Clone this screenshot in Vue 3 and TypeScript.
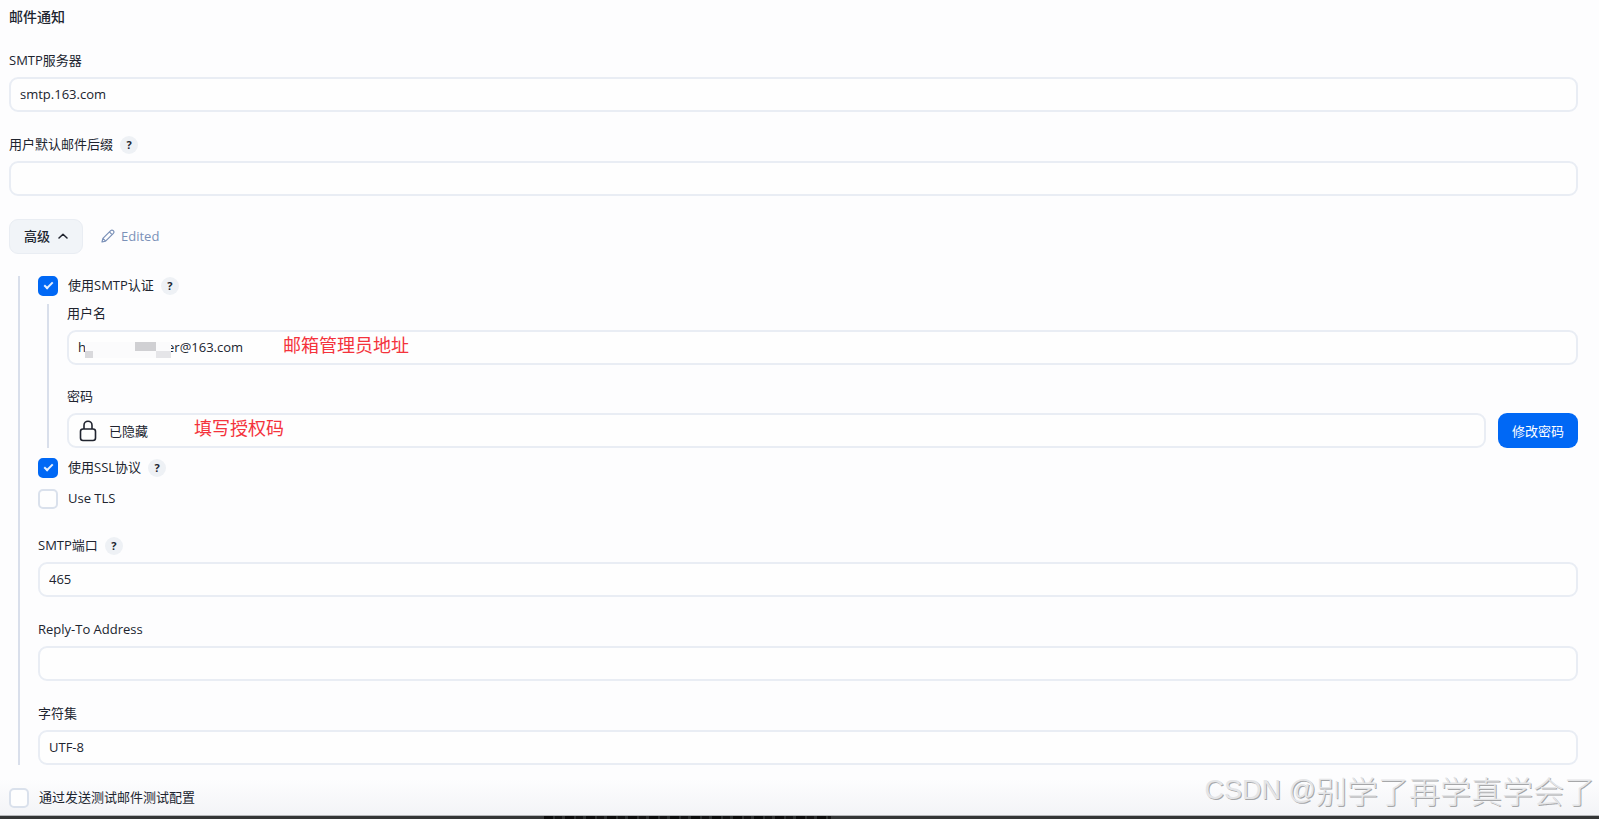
<script setup lang="ts">
import { reactive, ref } from 'vue'

interface MailSettings {
  server: string
  suffix: string
  useAuth: boolean
  username: string
  password: string
  useSsl: boolean
  useTls: boolean
  port: string
  replyTo: string
  charset: string
  sendTest: boolean
}

const settings = reactive<MailSettings>({
  server: 'smtp.163.com',
  suffix: '',
  useAuth: true,
  username: 'h' + '\u00a0'.repeat(24) + 'er@163.com',
  password: '已隐藏',
  useSsl: true,
  useTls: false,
  port: '465',
  replyTo: '',
  charset: 'UTF-8',
  sendTest: false,
})

const advancedOpen = ref(true)
</script>

<template>
  <main class="page">
    <form class="form" @submit.prevent>
      <h1 class="title">邮件通知</h1>

      <div class="field">
        <div class="label-row"><label for="server">SMTP服务器</label></div>
        <input id="server" v-model="settings.server" class="text" type="text" />
      </div>

      <div class="field">
        <div class="label-row">
          <label for="suffix">用户默认邮件后缀</label>
          <button class="help" type="button">?</button>
        </div>
        <input id="suffix" v-model="settings.suffix" class="text" type="text" />
      </div>

      <div class="toolbar">
        <button class="advanced" type="button" :aria-expanded="advancedOpen" @click="advancedOpen = !advancedOpen">
          高级
          <svg width="10" height="6" viewBox="0 0 10 6" fill="none" stroke="currentColor" stroke-width="1.5" stroke-linecap="round" stroke-linejoin="round">
            <path d="M1 5 5 1.2 9 5" />
          </svg>
        </button>
        <span class="edited">
          <svg width="14" height="14" viewBox="0 0 14 14" fill="none" stroke="currentColor" stroke-width="1.2" stroke-linejoin="round">
            <path d="M1 13 1.9 9.4 9.7 1.6Q11 .4 12.3 1.7T12.4 4.3L4.6 12.1ZM8.4 2.9 11.1 5.6M1.9 9.4 4.6 12.1" />
          </svg>
          Edited
        </span>
      </div>

      <section v-if="advancedOpen" class="group">
        <div class="check-row">
          <input id="auth" v-model="settings.useAuth" class="box" type="checkbox" />
          <label for="auth">使用SMTP认证</label>
          <button class="help" type="button">?</button>
        </div>

        <div class="subgroup">
          <div class="field">
            <div class="label-row"><label for="username">用户名</label></div>
            <div class="holder">
              <input id="username" v-model="settings.username" class="text" type="text" />
              <span class="mosaic"><i class="tile one"></i><i class="tile two"></i><i class="tile three"></i></span>
              <span class="note user-note">邮箱管理员地址</span>
            </div>
          </div>
          <div class="field">
            <div class="label-row"><label for="password">密码</label></div>
            <div class="password-row">
              <div class="holder">
                <svg class="lock" width="18" height="22" viewBox="0 0 18 22" fill="none" stroke="currentColor" stroke-width="1.6">
                  <rect x="1.5" y="9" width="15" height="11.5" rx="2.5" />
                  <path d="M5 9V5.2a4 4 0 0 1 8 0V9" />
                </svg>
                <input id="password" v-model="settings.password" class="text locked" type="text" readonly />
                <span class="note password-note">填写授权码</span>
              </div>
              <button class="primary" type="button">修改密码</button>
            </div>
          </div>
        </div>

        <div class="check-row">
          <input id="ssl" v-model="settings.useSsl" class="box" type="checkbox" />
          <label for="ssl">使用SSL协议</label>
          <button class="help" type="button">?</button>
        </div>
        <div class="check-row tls">
          <input id="tls" v-model="settings.useTls" class="box" type="checkbox" />
          <label for="tls">Use TLS</label>
        </div>

        <div class="field">
          <div class="label-row">
            <label for="port">SMTP端口</label>
            <button class="help" type="button">?</button>
          </div>
          <input id="port" v-model="settings.port" class="text" type="text" />
        </div>
        <div class="field">
          <div class="label-row"><label for="reply">Reply-To Address</label></div>
          <input id="reply" v-model="settings.replyTo" class="text" type="text" />
        </div>
        <div class="field">
          <div class="label-row"><label for="charset">字符集</label></div>
          <input id="charset" v-model="settings.charset" class="text" type="text" />
        </div>
      </section>

      <div class="check-row">
        <input id="test" v-model="settings.sendTest" class="box" type="checkbox" />
        <label for="test">通过发送测试邮件测试配置</label>
      </div>
    </form>

    <div class="edge"><div class="edge-marks"></div></div>
    <div class="watermark"><span class="latin">CSDN @</span>别学了再学真学会了</div>
  </main>
</template>

<style>
body {
  margin: 0;
  background: #fdfdfe;
}
</style>

<style scoped>
.page {
  position: relative;
  box-sizing: border-box;
  min-height: 100vh;
  display: flex;
  flex-direction: column;
  overflow: hidden;
  background: linear-gradient(#fdfdfe, #f2f3f6) bottom / 100% 40px no-repeat #fdfdfe;
  color: #20242f;
  font-family: "Open Sans", "Noto Sans CJK SC", sans-serif;
  font-size: 13px;
  line-height: 20px;
}
button,
input {
  font: inherit;
  color: inherit;
  margin: 0;
}
.form {
  padding: 7px 21px 7px 9px;
}
.title {
  margin: 0 0 24px;
  font-size: 14px;
  font-weight: 500;
  line-height: 20px;
}
.field {
  margin-bottom: 23px;
}
.label-row,
.check-row {
  display: flex;
  align-items: center;
  height: 20px;
}
.label-row {
  margin-bottom: 6px;
}
label {
  padding-bottom: 2px;
}
.text {
  display: block;
  box-sizing: border-box;
  width: 100%;
  height: 35px;
  padding: 0 9px 1px;
  border: 2px solid #e9edf4;
  border-radius: 9px;
  background: #fefefe;
  outline: none;
}
.help {
  width: 18px;
  height: 18px;
  margin-left: 7px;
  padding: 0;
  border: 0;
  border-radius: 50%;
  background: #eef1f5;
  font-size: 11px;
  font-weight: 700;
  line-height: 18px;
}
.toolbar {
  display: flex;
  align-items: center;
  gap: 18px;
  margin-bottom: 22px;
}
.advanced {
  display: flex;
  align-items: center;
  gap: 8px;
  height: 35px;
  padding: 0 14px 1px;
  border: 1px solid #e9edf3;
  border-radius: 9px;
  background: #f1f4f8;
  font-weight: 500;
}
.edited {
  display: flex;
  align-items: center;
  gap: 6px;
  padding-bottom: 2px;
  color: #7b91b8;
}
.group {
  margin: 0 0 23px 9px;
  padding-left: 18px;
  border-left: 2px solid #d9dfeb;
}
.group > .field:last-child,
.subgroup > .field:last-child {
  margin-bottom: 0;
}
.subgroup {
  margin: 8px 0 10px 9px;
  padding-left: 18px;
  border-left: 2px solid #d9dfeb;
}
.subgroup .field {
  margin-bottom: 22px;
}
.box {
  appearance: none;
  box-sizing: border-box;
  display: grid;
  place-items: center;
  width: 20px;
  height: 20px;
  margin-right: 10px;
  border: 2px solid #dae1ec;
  border-radius: 5px;
  background: #fefefe;
}
.box:checked {
  border-color: #0068f5;
  background: #0068f5;
}
.box:checked::after {
  content: "";
  box-sizing: border-box;
  width: 9px;
  height: 5px;
  margin-bottom: 3px;
  border: solid #e6f0ff;
  border-width: 0 0 2px 2px;
  transform: rotate(-45deg);
}
.tls {
  margin: 11px 0 27px;
}
.holder {
  position: relative;
  flex: 1;
}
.mosaic {
  position: absolute;
  left: 18px;
  top: 12px;
  width: 86px;
  height: 16px;
  background: #fbfbfc;
}
.tile {
  position: absolute;
}
.one {
  left: 0;
  bottom: 0;
  width: 8px;
  height: 7px;
  background: #d9d9dc;
}
.two {
  left: 50px;
  top: 0;
  width: 21px;
  height: 9px;
  background: #d0d0d3;
}
.three {
  right: 0;
  bottom: 0;
  width: 15px;
  height: 7px;
  background: #e5e5e8;
}
.note {
  position: absolute;
  top: 2px;
  color: #f4333c;
  font-size: 18px;
  line-height: 26px;
  pointer-events: none;
}
.user-note {
  left: 216px;
}
.password-note {
  left: 127px;
}
.password-row {
  display: flex;
  gap: 12px;
}
.lock {
  position: absolute;
  left: 12px;
  top: 7px;
}
.locked {
  padding-left: 40px;
}
.primary {
  height: 35px;
  padding: 0 14px;
  border: 0;
  border-radius: 9px;
  background: #0068f5;
  color: #fff;
}
.edge {
  height: 4px;
  margin-top: auto;
  border-top: 1px solid #b5b7ba;
  box-sizing: border-box;
  background: #343636;
}
.edge-marks {
  width: 18%;
  height: 3px;
  margin-left: 34%;
  background: repeating-linear-gradient(90deg, #0c0c0c 0 9px, #2c2e2e 9px 11px, #141414 11px 18px, #2c2e2e 18px 21px);
}
.watermark {
  position: absolute;
  right: 4px;
  bottom: 9px;
  display: flex;
  align-items: center;
  color: #e4e5e7;
  font-family: "Noto Sans CJK SC", sans-serif;
  font-size: 31px;
  font-weight: 300;
  line-height: 40px;
  white-space: pre;
  text-shadow: 1px 1px 0 #a6a7a9;
  pointer-events: none;
}
.latin {
  font-family: "Liberation Sans", sans-serif;
  font-size: 27px;
}
</style>
